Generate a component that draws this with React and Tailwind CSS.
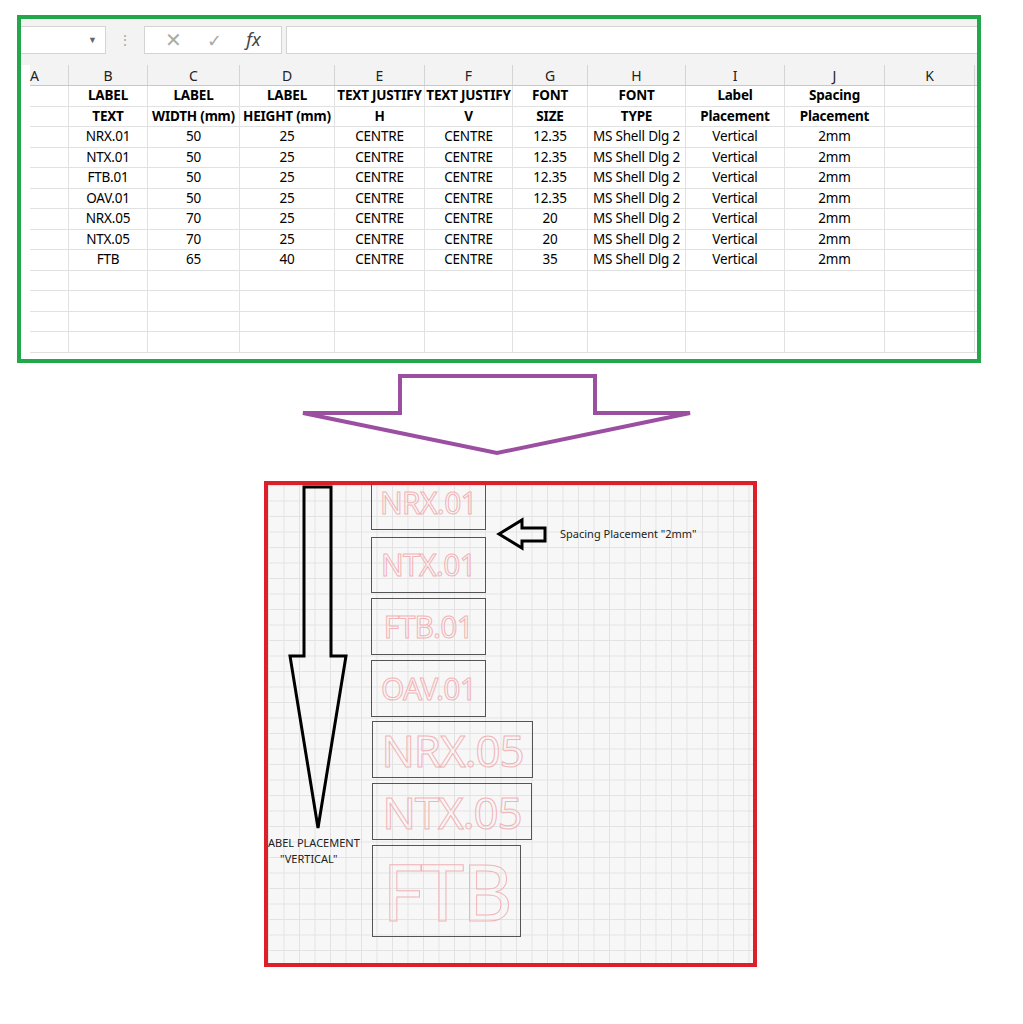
const cols = [
  { k: 'A', w: 39 }, { k: 'B', w: 79 }, { k: 'C', w: 92 }, { k: 'D', w: 95 }, { k: 'E', w: 90 },
  { k: 'F', w: 88 }, { k: 'G', w: 75 }, { k: 'H', w: 98 }, { k: 'I', w: 99 }, { k: 'J', w: 100 }, { k: 'K', w: 90 },
]

const head1 = ['', 'LABEL', 'LABEL', 'LABEL', 'TEXT JUSTIFY', 'TEXT JUSTIFY', 'FONT', 'FONT', 'Label', 'Spacing', '']
const head2 = ['', 'TEXT', 'WIDTH (mm)', 'HEIGHT (mm)', 'H', 'V', 'SIZE', 'TYPE', 'Placement', 'Placement', '']

const data = [
  ['NRX.01', '50', '25', '12.35'],
  ['NTX.01', '50', '25', '12.35'],
  ['FTB.01', '50', '25', '12.35'],
  ['OAV.01', '50', '25', '12.35'],
  ['NRX.05', '70', '25', '20'],
  ['NTX.05', '70', '25', '20'],
  ['FTB', '65', '40', '35'],
]

const labels = [
  { t: 'NRX.01', x: 371, y: 476, w: 115, h: 54, fs: 30 },
  { t: 'NTX.01', x: 371, y: 537, w: 115, h: 56, fs: 30 },
  { t: 'FTB.01', x: 371, y: 598, w: 115, h: 57, fs: 30 },
  { t: 'OAV.01', x: 371, y: 660, w: 115, h: 57, fs: 30 },
  { t: 'NRX.05', x: 372, y: 721, w: 161, h: 57, fs: 44 },
  { t: 'NTX.05', x: 372, y: 783, w: 160, h: 57, fs: 44 },
  { t: 'FTB', x: 372, y: 845, w: 149, h: 92, fs: 78 },
]

function Row({ cells, bold }) {
  return (
    <div className="flex h-[20.5px] border-b border-[#e1e1e1]">
      {cols.map((c, i) => (
        <div key={c.k} style={{ width: c.w }} className={`shrink-0 border-r border-[#e1e1e1] flex items-center justify-center whitespace-nowrap text-[13.5px] leading-none tracking-[-0.2px] text-black ${bold ? 'font-bold' : ''}`}>
          {cells[i]}
        </div>
      ))}
    </div>
  )
}

export default function App() {
  return (
    <div className="relative w-[1023px] h-[1024px] bg-white overflow-hidden font-['Liberation_Sans',sans-serif]">
      {/* spreadsheet */}
      <div className="absolute left-[17px] top-[15px] w-[964px] h-[348px] border-4 border-[#22a84a] overflow-hidden bg-white">
        <div className="flex items-center h-[38px] pt-[3px] bg-[#f3f3f3] gap-[4px]">
          <div className="w-[85px] h-[28px] bg-white border border-[#d4d4d4] border-l-0 flex items-center justify-end pr-2">
            <span className="text-[#666] text-[9px]">▼</span>
          </div>
          <div className="w-[30px] text-center text-[#aaa] text-[14px] leading-none">⋮</div>
          <div className="w-[138px] h-[28px] bg-white border border-[#d4d4d4] flex items-center justify-around px-2">
            <span className="text-[#aaa] text-[20px] leading-none">✕</span>
            <span className="text-[#aaa] text-[18px] leading-none">✓</span>
            <span className="text-[#444] text-[18px] italic font-['Liberation_Serif',serif]">fx</span>
          </div>
          <div className="flex-1 h-[28px] bg-white border border-[#d4d4d4] border-r-0" />
        </div>
        <div className="h-[8px] bg-[#f3f3f3]" />
        <div className="ml-[9px]">
          <div className="flex h-[21px] bg-[#f3f3f3] border-b border-[#c8c8c8]">
            {cols.map((c, i) => (
              <div key={c.k} style={{ width: c.w }} className={`shrink-0 border-r border-[#d4d4d4] flex items-center ${i === 0 ? 'justify-start' : 'justify-center'} text-[14px] text-[#222]`}>
                {c.k}
              </div>
            ))}
          </div>
          <Row cells={head1} bold />
          <Row cells={head2} bold />
          {data.map((d) => (
            <Row key={d[0]} cells={['', d[0], d[1], d[2], 'CENTRE', 'CENTRE', d[3], 'MS Shell Dlg 2', 'Vertical', '2mm', '']} />
          ))}
          <Row cells={[]} />
          <Row cells={[]} />
          <Row cells={[]} />
          <Row cells={[]} />
        </div>
      </div>

      {/* purple arrow */}
      <svg className="absolute left-0 top-0" width="1023" height="470">
        <polygon points="400,376 595,376 595,413 690,413 497,453 303,413 400,413" fill="none" stroke="#9b4fa0" strokeWidth="4" strokeLinejoin="miter" />
      </svg>

      {/* canvas */}
      <div className="absolute left-[264px] top-[481px] w-[493px] h-[486px] border-4 border-[#dd1f2a] overflow-hidden bg-[#f7f7f7] bg-[linear-gradient(#e3e3e3_1px,transparent_1px),linear-gradient(90deg,#e3e3e3_1px,transparent_1px)] bg-[size:15.5px_15.5px]">
        {labels.map((l) => (
          <div key={l.t} style={{ left: l.x - 268, top: l.y - 485, width: l.w, height: l.h, fontSize: l.fs }}
            className="absolute border border-[#555] flex items-center justify-center leading-none text-transparent [-webkit-text-stroke:1px_#f2b3b6] font-['Open_Sans',sans-serif] tracking-tight">
            {l.t}
          </div>
        ))}
      </div>
      <svg className="absolute left-0 top-0 pointer-events-none" width="1023" height="1024">
        <polygon points="304,487 331,487 331,656 346,656 318,828 290,656 304,656" fill="none" stroke="#000" strokeWidth="3" />
        <polygon points="499,534 522,520 522,528 545,528 545,541 522,541 522,548" fill="none" stroke="#000" strokeWidth="3" />
      </svg>
      <div className="absolute left-[560px] top-[526px] text-[11px] text-[#222] font-['Open_Sans',sans-serif]">Spacing Placement "2mm"</div>
      <div className="absolute left-[268px] top-[835px] text-[11px] text-[#222] leading-[16px] font-['Open_Sans',sans-serif] whitespace-nowrap">
        <div>ABEL PLACEMENT</div>
        <div className="pl-[12px]">"VERTICAL"</div>
      </div>
    </div>
  )
}
